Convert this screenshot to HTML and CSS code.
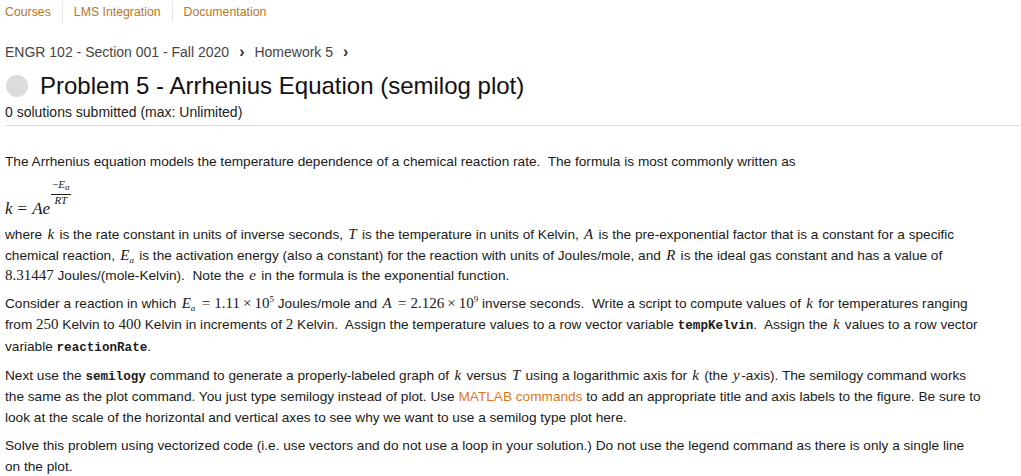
FILE: index.html
```html
<!DOCTYPE html>
<html>
<head>
<meta charset="utf-8">
<link rel="stylesheet" href="styles.css">
</head>
<body>
<nav class="topnav">
  <a class="nav-link" href="#">Courses</a>
  <a class="nav-link" href="#">LMS Integration</a>
  <a class="nav-link" href="#">Documentation</a>
</nav>
<div class="breadcrumb">
  <span>ENGR 102 - Section 001 - Fall 2020</span>
  <span class="chev">&#8250;</span>
  <span>Homework 5</span>
  <span class="chev">&#8250;</span>
</div>
<div class="title-row">
  <span class="status-dot"></span>
  <h1 class="title">Problem 5 - Arrhenius Equation (semilog plot)</h1>
</div>
<div class="subtitle">0 solutions submitted (max: Unlimited)</div>
<hr class="rule">
<div class="content">
  <p>The Arrhenius equation models the temperature dependence of a chemical reaction rate.&nbsp; The formula is most commonly written as</p>
  <div class="formula">
    <span class="fm">k</span><span class="feq">=</span><span class="fm">A</span><span class="fm">e</span><span class="frac"><span class="num"><span class="fr">&minus;</span><span class="fm">E</span><span class="fsub">a</span></span><span class="den"><span class="fm">RT</span></span></span>
  </div>
  <p>where <span class="m">k</span> is the rate constant in units of inverse seconds, <span class="m">T</span> is the temperature in units of Kelvin, <span class="m">A</span> is the pre-exponential factor that is a constant for a specific chemical reaction, <span class="m">E<sub>a</sub></span> is the activation energy (also a constant) for the reaction with units of Joules/mole, and <span class="m">R</span> is the ideal gas constant and has a value of <span class="mr">8.31447</span> Joules/(mole-Kelvin).&nbsp; Note the <span class="m">e</span> in the formula is the exponential function.</p>
  <p>Consider a reaction in which <span class="m">E<sub>a</sub></span><span class="mr eqop">=</span><span class="mr">1.11<span class="times">&times;</span>10<sup>5</sup></span> Joules/mole and <span class="m">A</span><span class="mr eqop">=</span><span class="mr">2.126<span class="times">&times;</span>10<sup>9</sup></span> inverse seconds.&nbsp; Write a script to compute values of <span class="m">k</span> for temperatures ranging from <span class="mr">250</span> Kelvin to <span class="mr">400</span> Kelvin in increments of <span class="mr">2</span> Kelvin.&nbsp; Assign the temperature values to a row vector variable <code>tempKelvin</code>.&nbsp; Assign the <span class="m">k</span> values to a row vector variable <code>reactionRate</code>.</p>
  <p>Next use the <code>semilogy</code> command to generate a properly-labeled graph of <span class="m">k</span> versus <span class="m">T</span> using a logarithmic axis for <span class="m">k</span> (the <span class="m">y</span>-axis). The semilogy command works the same as the plot command. You just type semilogy instead of plot. Use <a class="link" href="#">MATLAB commands</a> to add an appropriate title and axis labels to the figure. Be sure to look at the scale of the horizontal and vertical axes to see why we want to use a semilog type plot here.</p>
  <p>Solve this problem using vectorized code (i.e. use vectors and do not use a loop in your solution.) Do not use the legend command as there is only a single line on the plot.</p>
</div>
</body>
</html>
```

FILE: styles.css
```css
body {
  margin: 0;
  padding: 0 0 0 5px;
  font-family: "Liberation Sans", Arial, sans-serif;
  color: #222;
  background: #fff;
}
.topnav {
  display: flex;
  align-items: center;
  height: 24px;
  font-size: 12.3px;
}
.nav-link {
  color: #b8781c;
  text-decoration: none;
  padding: 0 11px;
  border-left: 1px solid #e6e6e6;
  line-height: 20px;
}
.nav-link:first-child {
  padding-left: 0;
  border-left: none;
}
.breadcrumb {
  display: flex;
  align-items: center;
  gap: 10px;
  margin-top: 16px;
  font-size: 14px;
  color: #444;
  height: 24px;
}
.chev {
  font-weight: bold;
  font-size: 16px;
  color: #333;
}
.title-row {
  display: flex;
  align-items: center;
  gap: 12px;
  margin-top: 8px;
  height: 28px;
}
.status-dot {
  width: 22px;
  height: 22px;
  border-radius: 50%;
  background: #dcdcdc;
  margin-left: 1px;
}
.title {
  margin: 0;
  font-size: 24px;
  font-weight: normal;
  color: #111;
}
.subtitle {
  font-size: 14px;
  line-height: 18px;
  color: #222;
  margin-top: 3px;
}
.rule {
  margin: 4px 1px 0 0;
  border: none;
  border-top: 1px solid #dedede;
}
.content {
  font-size: 13.65px;
  line-height: 20.6px;
  color: #1a1a1a;
  padding-top: 26px;
  padding-right: 39px;
}
.content p {
  margin: 0 0 7.5px 0;
}
.m {
  font-family: "Liberation Serif", "Times New Roman", serif;
  font-style: italic;
  font-size: 15px;
  margin: 0 1.5px;
  line-height: 0;
}
.m sub {
  font-size: 9px;
  vertical-align: -3px;
  line-height: 0;
}
.mr {
  font-family: "Liberation Serif", "Times New Roman", serif;
  font-size: 15px;
  line-height: 0;
}
.eqop {
  margin: 0 4px 0 5px;
}
.times {
  margin: 0 3px;
}
.mr sup {
  font-size: 9px;
  vertical-align: 6px;
  line-height: 0;
}
code {
  font-family: "Liberation Mono", "Courier New", monospace;
  font-weight: bold;
  font-size: 12.6px;
}
.link {
  color: #e0761f;
  text-decoration: none;
}
.formula {
  display: flex;
  align-items: flex-end;
  height: 39px;
  margin: 0 0 6px 0;
  font-family: "Liberation Serif", serif;
  font-size: 17px;
  line-height: 20px;
}
.fm { font-style: italic; }
.feq { margin: 0 5px; }
.frac {
  display: inline-flex;
  flex-direction: column;
  align-items: center;
  margin-bottom: 13px;
  margin-left: 1px;
  line-height: 11px;
  font-size: 11px;
}
.frac .num {
  border-bottom: 1px solid #222;
  padding: 0 1px 1px;
}
.fsub { font-style: italic; font-size: 9px; vertical-align: -2px; }
```
